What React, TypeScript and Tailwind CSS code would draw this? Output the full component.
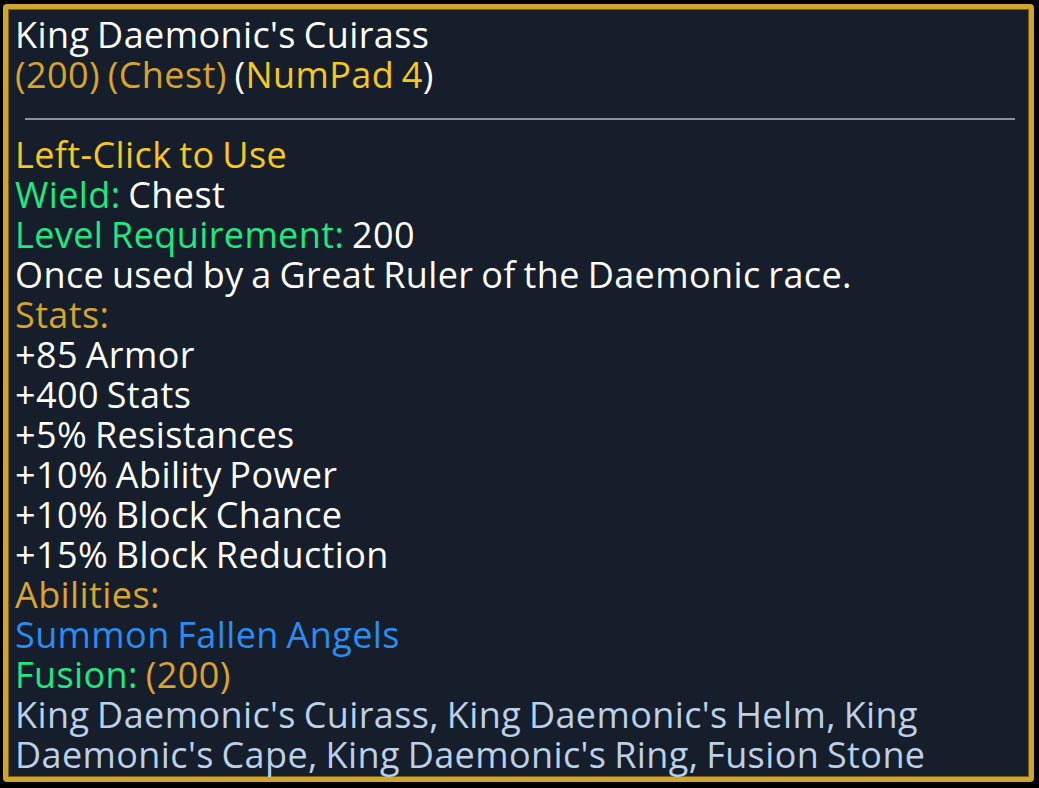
import React from "react";

const W = "text-white";
const GOLD = "text-[#d9a42b]";
const YEL = "text-[#f6c81c]";
const GRN = "text-[#1fe882]";
const BLU = "text-[#2a8df2]";
const LB = "text-[#bcd0e8]";

export default function App() {
  return (
    <div className="w-[1039px] h-[788px] bg-black pt-[4px] pl-[3px] pr-[5px] pb-[6px]">
      <div
        className="h-full w-full rounded-[4px] border-[5px] border-[#cfa52e] bg-[#151e2a] pt-[6px] pl-[7px] pr-[14px] shadow-[inset_0_0_0_1px_#7a5c12]"
        style={{ fontFamily: "'Open Sans', 'Noto Sans', sans-serif" }}
      >
        <div className="text-[36px] leading-[40px] tracking-[0.4px] [word-spacing:-2px]">
          <div className={W}>King Daemonic's Cuirass</div>
          <div>
            <span className={GOLD}>(200) (Chest) </span>
            <span className={W}>(</span>
            <span className={YEL}>NumPad 4</span>
            <span className={W}>)</span>
          </div>
          <div className="h-[40px] pt-[23px] pl-[10px]">
            <div className="h-[2px] w-full bg-[#8c9098]" />
          </div>
          <div className={YEL}>Left-Click to Use</div>
          <div>
            <span className={GRN}>Wield: </span>
            <span className={W}>Chest</span>
          </div>
          <div>
            <span className={GRN}>Level Requirement: </span>
            <span className={W}>200</span>
          </div>
          <div className={W}>Once used by a Great Ruler of the Daemonic race.</div>
          <div className={GOLD}>Stats:</div>
          <div className={W}>+85 Armor</div>
          <div className={W}>+400 Stats</div>
          <div className={W}>+5% Resistances</div>
          <div className={W}>+10% Ability Power</div>
          <div className={W}>+10% Block Chance</div>
          <div className={W}>+15% Block Reduction</div>
          <div className={GOLD}>Abilities:</div>
          <div className={BLU}>Summon Fallen Angels</div>
          <div>
            <span className={GRN}>Fusion: </span>
            <span className={GOLD}>(200)</span>
          </div>
          <div className={LB}>
            King Daemonic's Cuirass, King Daemonic's Helm, King
            <br />
            Daemonic's Cape, King Daemonic's Ring, Fusion Stone
          </div>
        </div>
      </div>
    </div>
  );
}
